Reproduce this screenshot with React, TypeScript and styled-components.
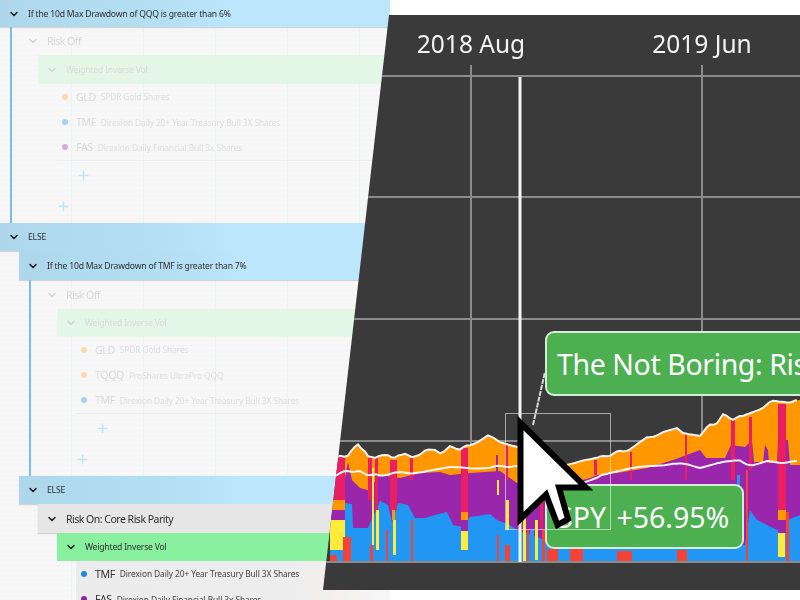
import React, { FC } from "react";
import styled, { createGlobalStyle } from "styled-components";
import { ChevronDown, Plus } from "lucide-react";

const GlobalStyle = createGlobalStyle`
  html, body {
    margin: 0;
    padding: 0;
    background: #fff;
    font-family: "Noto Sans", "Open Sans", sans-serif;
  }
`;

const Page = styled.div`
  position: relative;
  width: 800px;
  height: 600px;
  overflow: hidden;
  background: #fff;
`;

const TreePanel = styled.div`
  width: 390px;
  height: 600px;
  overflow: hidden;
  background-color: #f7f7f7;
  background-image: repeating-linear-gradient(90deg, transparent 0 71px, #e7f5f3 71px 72px),
    repeating-linear-gradient(0deg, transparent 0 4px, #f4f4f4 4px 5px);
  filter: blur(0.35px);
`;

const Branch = styled.div<{ $indent: number; $height: number }>`
  margin-left: ${p => p.$indent}px;
  height: ${p => p.$height}px;
  border-left: 2px solid #74bdf6;
  box-sizing: border-box;
`;

type Tone = "blue" | "grey" | "green" | "paleGreen" | "plain";

const toneBackground: Record<Tone, string> = {
  blue: "linear-gradient(90deg, #aed7ec, #b4dff3 40%, #bce6fb 60%)",
  grey: "#e6e6e6",
  green: "#88f09f",
  paleGreen: "#e4f6e6",
  plain: "transparent"
};

const Row = styled.div<{ $left: number; $height: number; $tone: Tone }>`
  display: flex;
  align-items: center;
  box-sizing: border-box;
  height: ${p => p.$height}px;
  margin-left: ${p => p.$left}px;
  padding-left: 8px;
  gap: 14px;
  background: ${p => toneBackground[p.$tone]};
  box-shadow: ${p => (p.$tone === "blue" || p.$tone === "grey" ? "0 1px 1px #d4d4d4" : "none")};
`;

const Toggle = styled(ChevronDown)<{ $faded?: boolean }>`
  flex: none;
  width: 12px;
  height: 12px;
  margin-right: -6px;
  stroke-width: 3px;
  color: ${p => (p.$faded ? "#d2d2d2" : "#1c1c1c")};
`;

const RowLabel = styled.span<{ $size: number; $faded?: boolean }>`
  font-size: ${p => p.$size}px;
  letter-spacing: ${p => (p.$size > 10 ? -0.5 : -0.2)}px;
  white-space: nowrap;
  color: ${p => (p.$faded ? "#d9d9d9" : "#2e2e2e")};
`;

const Leaf = styled.div<{ $left: number; $solid?: boolean }>`
  display: flex;
  align-items: center;
  box-sizing: border-box;
  height: 25.4px;
  margin-left: ${p => p.$left}px;
  padding-left: ${p => (p.$solid ? 5 : 4)}px;
  border-left: ${p => (p.$solid ? "1px solid #fff" : "none")};
  background: ${p => (p.$solid ? "linear-gradient(90deg, #ececec, #ededed 220px, #f5efee 260px, #f6f6f6 300px)" : "transparent")};
`;

const Dot = styled.span<{ $color: string; $faded?: boolean }>`
  flex: none;
  width: 6px;
  height: 6px;
  margin-right: 8px;
  border-radius: 50%;
  background: ${p => p.$color};
  opacity: ${p => (p.$faded ? 0.35 : 1)};
`;

const Ticker = styled.span<{ $faded?: boolean }>`
  font-size: 10.6px;
  letter-spacing: -0.4px;
  margin-right: 5px;
  color: ${p => (p.$faded ? "#dadada" : "#333")};
`;

const Description = styled.span<{ $faded?: boolean }>`
  font-size: 8.4px;
  letter-spacing: -0.1px;
  white-space: nowrap;
  color: ${p => (p.$faded ? "#dedede" : "#444")};
`;

const AddRow = styled.div<{ $left: number; $height: number; $rule?: boolean }>`
  display: flex;
  align-items: center;
  box-sizing: border-box;
  height: ${p => p.$height}px;
  padding-left: ${p => p.$left}px;
  border-top: ${p => (p.$rule ? "1px solid #ececf2" : "none")};
  color: #c0e5f8;
`;

const RuleInset = styled.div<{ $left: number }>`
  margin-left: ${p => p.$left}px;
`;

const ChartPanel = styled.div`
  position: absolute;
  left: 320px;
  top: 15px;
  width: 480px;
  height: 575px;
  overflow: hidden;
  background: #3a3a3a;
  clip-path: polygon(69px 0, 100% 0, 100% 100%, 3px 100%);
`;

const ChartSvg = styled.svg`
  display: block;
  filter: blur(0.3px);
`;

const AxisLabel = styled.text`
  font-family: "Noto Sans", "Open Sans", sans-serif;
  font-size: 24.5px;
  fill: #f4f4f4;
  text-anchor: middle;
`;

const Callout = styled.div<{ $left: number; $top: number; $width: number; $tracking: number; $wordGap: number }>`
  position: absolute;
  left: ${p => p.$left}px;
  top: ${p => p.$top}px;
  width: ${p => p.$width}px;
  height: 65px;
  display: flex;
  align-items: center;
  box-sizing: border-box;
  padding-left: 10px;
  border: 2px solid #d5ecd6;
  border-radius: 9px;
  background: #4caf50;
  color: #fff;
  font-size: 28.5px;
  letter-spacing: ${p => p.$tracking}px;
  word-spacing: ${p => p.$wordGap}px;
  white-space: nowrap;
`;

const SelectionBox = styled.div`
  position: absolute;
  left: 185px;
  top: 398px;
  width: 104px;
  height: 115px;
  border: 1px solid rgba(255, 255, 255, 0.55);
`;

const Cursor = styled.svg`
  position: absolute;
  left: 195px;
  top: 395px;
`;

const BASE = 562;
const ORANGE = "#ff9800";
const PURPLE = "#9a26ab";
const BLUE = "#2196f3";
const PINK = "#e91e63";
const YELLOW = "#ffeb3b";
const RED = "#f44336";

type Point = [number, number];
type Stripe = [number, number, number, number, string];

const topLine: Point[] = [
  [333, 458], [337, 456], [344, 457], [348, 455], [358, 444], [365, 452], [368, 457], [375, 457], [382, 456],
  [388, 455], [395, 458], [405, 453], [412, 458], [425, 451], [435, 449], [440, 453], [450, 447], [460, 449],
  [470, 445], [488, 436], [500, 442], [517, 446], [540, 462], [560, 466], [583, 460], [597, 458], [610, 455],
  [620, 451], [630, 450], [647, 438], [663, 433], [677, 429], [683, 433], [700, 435], [710, 425], [717, 423],
  [723, 415], [733, 419], [743, 416], [757, 410], [763, 407], [773, 401], [787, 402], [800, 400]
];

const midLine: Point[] = [
  [333, 476], [340, 473], [350, 471], [360, 472], [370, 475], [380, 475], [395, 473], [410, 473], [430, 470],
  [450, 468], [470, 468], [490, 467], [515, 466], [560, 478], [580, 483], [597, 478], [610, 472], [630, 469],
  [647, 467], [673, 463], [700, 467], [717, 463], [740, 461], [753, 466], [767, 462], [800, 462]
];

const purpleTop: Point[] = [
  [333, 500], [345, 478], [348, 462], [352, 480], [360, 488], [368, 490], [380, 475], [400, 478], [420, 473],
  [440, 472], [450, 475], [470, 473], [500, 471], [517, 483], [545, 490], [590, 478], [597, 475], [617, 473],
  [647, 468], [673, 460], [700, 450], [706, 458], [725, 458], [731, 445], [745, 447], [752, 440], [754, 462],
  [763, 462], [765, 445], [768, 450], [769, 463], [777, 463], [778, 440], [788, 440], [790, 465], [800, 465]
];

const blueTop: Point[] = [
  [345, 503], [352, 504], [353, 528], [368, 528], [380, 501], [388, 505], [392, 522], [398, 503], [408, 505],
  [415, 518], [425, 518], [435, 515], [447, 512], [453, 525], [462, 527], [470, 517], [490, 514], [497, 520],
  [510, 525], [517, 530], [545, 540], [745, 545], [750, 510], [757, 520], [767, 525], [777, 530], [787, 520],
  [800, 515]
];

const stripes: Stripe[] = [
  [330, 15, 456, 500, PINK], [330, 15, 500, 510, ORANGE], [330, 15, 510, 520, PURPLE], [330, 15, 520, 550, YELLOW],
  [330, 15, 550, 562, BLUE], [330, 7, 555, 562, RED], [343, 8, 537, 562, RED],
  [368, 4, 458, 500, PINK], [372, 2, 468, 545, YELLOW], [375, 3, 458, 510, PINK], [376, 3, 510, 550, YELLOW],
  [370, 3, 545, 562, RED], [386, 2, 530, 562, RED],
  [390, 7, 460, 510, PINK], [393, 3, 520, 555, YELLOW], [392, 3, 510, 520, ORANGE],
  [410, 3, 458, 480, PINK], [411, 2, 520, 562, RED],
  [461, 7, 448, 512, PINK], [461, 7, 512, 520, ORANGE], [461, 7, 520, 531, PURPLE], [461, 7, 531, 550, YELLOW],
  [496, 2, 455, 490, PURPLE], [497, 2, 480, 495, YELLOW], [497, 2, 535, 562, RED],
  [505, 3, 445, 480, PINK], [506, 3, 500, 530, YELLOW], [505, 5, 545, 562, RED],
  [523, 3, 510, 562, YELLOW], [527, 2, 530, 562, RED], [530, 4, 530, 562, BLUE], [535, 3, 520, 560, YELLOW],
  [540, 3, 500, 530, PINK], [542, 3, 530, 562, RED],
  [547, 11, 549, 562, RED], [570, 13, 549, 562, RED], [617, 15, 551, 562, RED], [677, 10, 550, 562, RED],
  [594, 3, 460, 475, PINK], [630, 2, 452, 480, PINK], [685, 2, 433, 480, PINK],
  [731, 4, 418, 480, PINK], [737, 3, 475, 490, BLUE], [746, 2, 470, 562, RED], [749, 3, 417, 470, PINK],
  [778, 8, 404, 510, PINK], [778, 8, 510, 520, ORANGE], [778, 8, 520, 533, PURPLE], [778, 7, 533, 557, YELLOW],
  [786, 3, 512, 562, RED]
];

const toArea = (line: Point[]) =>
  `${line[0][0]},${BASE} ${line.map(p => p.join(",")).join(" ")} ${line[line.length - 1][0]},${BASE}`;

// small wobble so the equity lines look like daily data
const toJagged = (line: Point[]) => {
  const out: string[] = [];
  for (let i = 0; i < line.length - 1; i++) {
    const [x0, y0] = line[i];
    const [x1, y1] = line[i + 1];
    const steps = Math.max(1, Math.round((x1 - x0) / 3));
    for (let s = 0; s < steps; s++) {
      const x = x0 + ((x1 - x0) * s) / steps;
      const y = y0 + ((y1 - y0) * s) / steps + Math.sin(x * 2.3) * 0.9;
      out.push(`${x.toFixed(1)},${y.toFixed(1)}`);
    }
  }
  return out.join(" ");
};

const Chart: FC = () => (
  <ChartSvg width={480} height={575} viewBox="320 15 480 575">
    <g stroke="#8b8b8b" strokeWidth={2}>
      {[76, 197, 319, 441].map(y => (
        <line key={y} x1={320} x2={800} y1={y} y2={y} />
      ))}
      {[471, 702].map(x => (
        <line key={x} x1={x} x2={x} y1={65} y2={BASE} />
      ))}
    </g>
    <AxisLabel x={471} y={53}>2018 Aug</AxisLabel>
    <AxisLabel x={702} y={53}>2019 Jun</AxisLabel>
    <polygon points={toArea(topLine)} fill={ORANGE} />
    <polygon points={toArea(purpleTop)} fill={PURPLE} />
    <polygon points={toArea(blueTop)} fill={BLUE} />
    {stripes.map(([x, w, y0, y1, color], i) => (
      <rect key={i} x={x} y={y0} width={w} height={y1 - y0} fill={color} />
    ))}
    <polyline points={toJagged(topLine)} fill="none" stroke="#f4f4f4" strokeWidth={2} />
    <polyline points={toJagged(midLine)} fill="none" stroke="#f4f4f4" strokeWidth={2} />
    <line x1={320} x2={800} y1={BASE} y2={BASE} stroke="#8b8b8b" strokeWidth={2} />
    <line x1={520} x2={520} y1={77} y2={BASE} stroke="#f4f4f4" strokeWidth={3} />
    <line x1={533} y1={425} x2={545} y2={372} stroke="#d8d8d8" strokeWidth={2} strokeDasharray="5 1" />
  </ChartSvg>
);

const Pointer: FC = () => (
  <Cursor width={90} height={125} viewBox="515 410 90 125">
    <path
      d="M520.5 423 L586 487.5 L559 487.5 L568 519 L557.5 525 L546 494.5 L520.5 519 Z"
      fill="#fff"
      stroke="#000"
      strokeWidth={6}
      strokeMiterlimit={10}
    />
  </Cursor>
);

const AddButton: FC<{ left: number; height: number; rule?: boolean }> = ({ left, height, rule }) => (
  <AddRow $left={left} $height={height} $rule={rule}>
    <Plus size={15} strokeWidth={2.2} />
  </AddRow>
);

type HeaderProps = {
  left: number;
  height: number;
  tone: Tone;
  size?: number;
  faded?: boolean;
  children: string;
};

const Header: FC<HeaderProps> = ({ left, height, tone, size = 8.6, faded, children }) => (
  <Row $left={left} $height={height} $tone={tone}>
    <Toggle $faded={faded} />
    <RowLabel $size={size} $faded={faded}>
      {children}
    </RowLabel>
  </Row>
);

type Holding = { color: string; ticker: string; name: string };

const GLD: Holding = { color: "#ffa726", ticker: "GLD", name: "SPDR Gold Shares" };
const TQQQ: Holding = { color: "#ffa726", ticker: "TQQQ", name: "ProShares UltraPro QQQ" };
const TMF: Holding = { color: "#1e88e5", ticker: "TMF", name: "Direxion Daily 20+ Year Treasury Bull 3X Shares" };
const FAS: Holding = { color: "#8e24aa", ticker: "FAS", name: "Direxion Daily Financial Bull 3x Shares" };

const HoldingRow: FC<{ holding: Holding; left: number; faded?: boolean }> = ({ holding, left, faded }) => (
  <Leaf $left={left} $solid={!faded}>
    <Dot $color={holding.color} $faded={faded} />
    <Ticker $faded={faded}>{holding.ticker}</Ticker>
    <Description $faded={faded}>{holding.name}</Description>
  </Leaf>
);

const App: FC = () => (
  <Page>
    <GlobalStyle />
    <TreePanel>
      <Header left={0} height={27} tone="blue">If the 10d Max Drawdown of QQQ is greater than 6%</Header>
      <Branch $indent={10} $height={196}>
        <Header left={7} height={28} tone="plain" size={10.5} faded>Risk Off</Header>
        <Header left={26} height={29} tone="paleGreen" faded>Weighted Inverse Vol</Header>
        <HoldingRow holding={GLD} left={46} faded />
        <HoldingRow holding={TMF} left={46} faded />
        <HoldingRow holding={FAS} left={46} faded />
        <RuleInset $left={45}>
          <AddButton left={19} height={30} rule />
        </RuleInset>
        <AddButton left={44} height={33} />
      </Branch>
      <Header left={0} height={28} tone="blue">ELSE</Header>
      <Header left={19} height={29} tone="blue">If the 10d Max Drawdown of TMF is greater than 7%</Header>
      <Branch $indent={29} $height={196}>
        <Header left={7} height={29} tone="plain" size={10.5} faded>Risk Off</Header>
        <Header left={26} height={28} tone="paleGreen" faded>Weighted Inverse Vol</Header>
        <HoldingRow holding={GLD} left={46} faded />
        <HoldingRow holding={TQQQ} left={46} faded />
        <HoldingRow holding={TMF} left={46} faded />
        <RuleInset $left={45}>
          <AddButton left={19} height={30} rule />
        </RuleInset>
        <AddButton left={44} height={33} />
      </Branch>
      <Header left={19} height={28} tone="blue">ELSE</Header>
      <Header left={38} height={29} tone="grey" size={10.5}>Risk On: Core Risk Parity</Header>
      <Header left={57} height={28} tone="green">Weighted Inverse Vol</Header>
      <HoldingRow holding={TMF} left={75} />
      <HoldingRow holding={FAS} left={75} />
    </TreePanel>
    <ChartPanel>
      <Chart />
      <Callout $left={225} $top={316} $width={300} $tracking={-0.4} $wordGap={0}>The Not Boring: Risk On</Callout>
      <Callout $left={225} $top={469} $width={199} $tracking={0} $wordGap={3}>SPY +56.95%</Callout>
      <SelectionBox />
      <Pointer />
    </ChartPanel>
  </Page>
);

export default App;
